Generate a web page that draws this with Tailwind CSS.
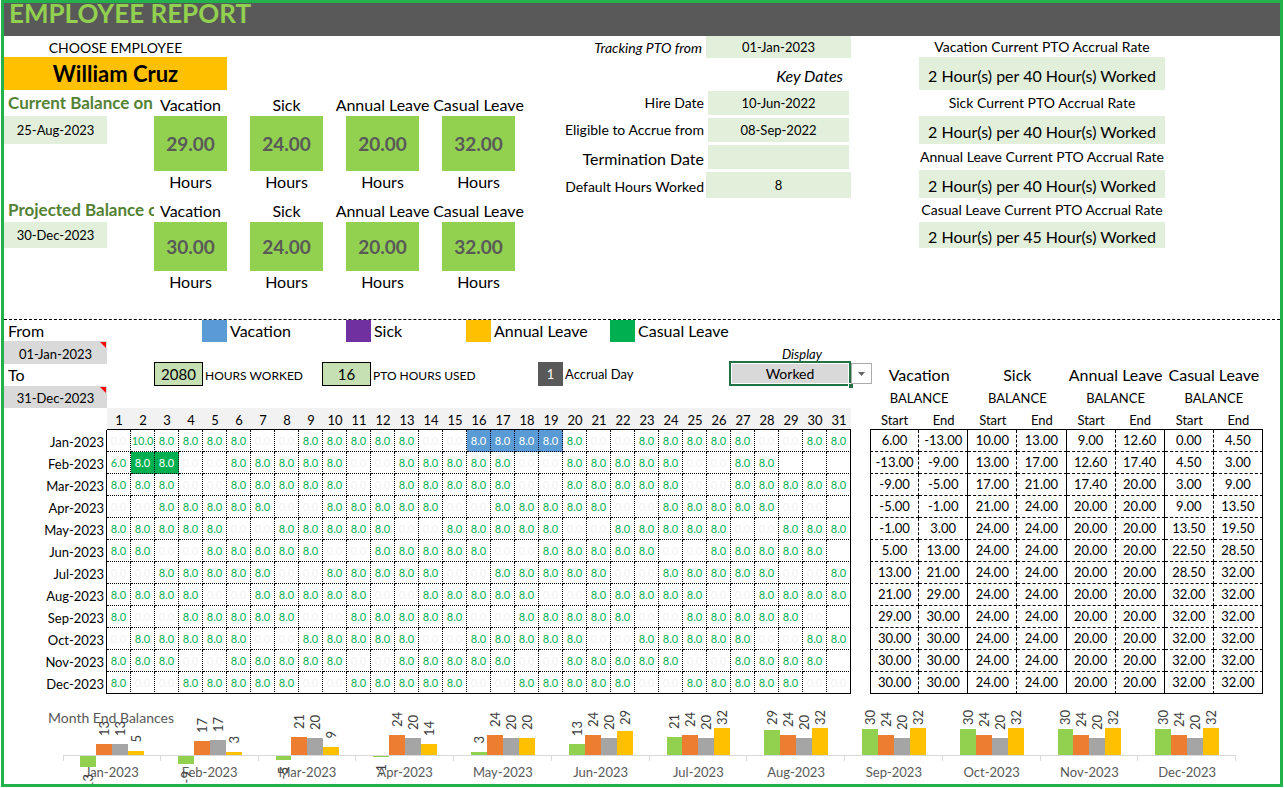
<!DOCTYPE html>
<html lang="en">
<head>
  <meta charset="UTF-8">
  <meta name="viewport" content="width=device-width, initial-scale=1.0">
  <title>Employee Report - PTO Tracker</title>
  <script src="https://cdn.jsdelivr.net/npm/@tailwindcss/browser@4"></script>
</head>
<body class="bg-white text-black font-[Lato,'Open_Sans',sans-serif]">

  <div class="mx-px border-[3px] border-[#22b14c] text-[16px] leading-5 whitespace-nowrap">

    <header class="h-[33px] bg-[#595959] px-[5px]">
      <h1 class="text-[26px] leading-[21px] font-bold text-[#92d050]">EMPLOYEE REPORT</h1>
    </header>

    <!-- Balances, key dates, accrual rates -->
    <section class="flex h-[284px] border-b border-dashed border-black">

      <div class="w-[528px] flex-none">
        <div class="w-[223px]">
          <label for="employee" class="block h-[21px] leading-[23px] text-center text-[14px]">CHOOSE EMPLOYEE</label>
          <select id="employee" class="block w-full h-[33px] appearance-none bg-[#ffc000] text-center [text-align-last:center] text-[22px] leading-[33px] font-bold">
            <option>William Cruz</option>
          </select>
        </div>

        <div class="flex h-[108px]">
          <div class="w-[150px] overflow-hidden">
            <h2 class="h-[26px] pl-1 leading-[26px] text-[17px] font-bold text-[#548235]">Current Balance on</h2>
            <p class="w-[103px] h-7 leading-7 bg-[#e2efda] text-center text-[13px]">25-Aug-2023</p>
          </div>
          <div id="currentBalances" class="flex gap-[23px]"></div>
        </div>

        <div class="flex">
          <div class="w-[150px] overflow-hidden">
            <h2 class="h-6 pl-1 leading-6 text-[17px] font-bold text-[#548235]">Projected Balance on</h2>
            <p class="w-[103px] h-[26px] leading-[26px] bg-[#e2efda] text-center text-[13px]">30-Dec-2023</p>
          </div>
          <div id="projectedBalances" class="flex gap-[23px]"></div>
        </div>
      </div>

      <div class="flex-1 text-[14px]">
        <div class="flex justify-end items-center h-[22px]">
          <span class="italic pr-1 pt-0.5">Tracking PTO from</span>
          <span class="w-[145px] h-[22px] leading-[22px] bg-[#e2efda] text-center text-[13px]">01-Jan-2023</span>
        </div>
        <p class="h-[33px] pr-2 pt-2 text-right text-[16px] leading-5 italic">Key Dates</p>
        <div class="flex flex-col gap-[3px]">
          <div class="flex justify-end h-6 leading-6 pr-0.5">
            <span class="pr-1">Hire Date</span>
            <span class="w-[141px] bg-[#e2efda] text-center text-[13px]">10-Jun-2022</span>
          </div>
          <div class="flex justify-end h-6 leading-6 pr-0.5">
            <span class="pr-1">Eligible to Accrue from</span>
            <span class="w-[141px] bg-[#e2efda] text-center text-[13px]">08-Sep-2022</span>
          </div>
          <div class="flex justify-end h-6 leading-7 pr-0.5">
            <span class="pr-1 text-[16px]">Termination Date</span>
            <span class="w-[141px] bg-[#e2efda]"></span>
          </div>
          <div class="flex justify-end h-[26px] leading-[26px]">
            <span class="pr-0.5 pt-0.5">Default Hours Worked</span>
            <span class="w-[145px] bg-[#e2efda] text-center text-[13px]">8</span>
          </div>
        </div>
      </div>

      <div class="w-[246px] flex-none ml-[68px] mr-[115px] text-center">
        <p class="h-[21px] leading-[21px] text-[14px]">Vacation Current PTO Accrual Rate</p>
        <p class="h-[33px] leading-[38px] bg-[#e2efda]">2 Hour(s) per 40 Hour(s) Worked</p>
        <p class="h-[26px] leading-[26px] text-[14px]">Sick Current PTO Accrual Rate</p>
        <p class="h-7 leading-8 bg-[#e2efda]">2 Hour(s) per 40 Hour(s) Worked</p>
        <p class="h-[26px] leading-[26px] text-[14px]">Annual Leave Current PTO Accrual Rate</p>
        <p class="h-7 leading-8 bg-[#e2efda]">2 Hour(s) per 40 Hour(s) Worked</p>
        <p class="h-6 leading-6 text-[14px]">Casual Leave Current PTO Accrual Rate</p>
        <p class="h-[26px] leading-[30px] bg-[#e2efda]">2 Hour(s) per 45 Hour(s) Worked</p>
      </div>
    </section>

    <section class="flex gap-[19px] pr-[17px]">

      <div class="flex-1">
        <div class="flex h-[88px]">
          <div class="w-[103px] flex-none">
            <label for="fromDate" class="block h-[21px] leading-[22px] pl-1">From</label>
            <div class="relative">
              <input id="fromDate" type="text" value="01-Jan-2023" class="block w-full h-[23px] pt-0.5 bg-[#d9d9d9] text-center text-[13px]">
              <svg class="absolute top-px right-px" width="6" height="6"><path d="M0 0h6v6z" fill="#f00"/></svg>
            </div>
            <label for="toDate" class="block h-[22px] leading-[22px] pl-1">To</label>
            <div class="relative">
              <input id="toDate" type="text" value="31-Dec-2023" class="block w-full h-[22px] pt-0.5 bg-[#d9d9d9] text-center text-[13px]">
              <svg class="absolute top-px right-px" width="6" height="6"><path d="M0 0h6v6z" fill="#f00"/></svg>
            </div>
          </div>

          <div class="flex-1">
            <ul class="flex h-[22px] pl-[95px] leading-[22px]">
              <li class="flex gap-[3px] w-36"><span class="w-[25px] bg-[#5b9bd5]"></span>Vacation</li>
              <li class="flex gap-[3px] w-[120px]"><span class="w-[25px] bg-[#7030a0]"></span>Sick</li>
              <li class="flex gap-[3px] w-36"><span class="w-[25px] bg-[#ffc000]"></span>Annual Leave</li>
              <li class="flex gap-[3px]"><span class="w-[25px] bg-[#00b050]"></span>Casual Leave</li>
            </ul>

            <div class="flex items-end h-11 pl-[47px] text-[13px]">
              <div class="flex h-6 w-[168px]">
                <span class="w-[49px] h-6 leading-[23px] border border-black bg-[#c6e0b4] text-center text-[15px]">2080</span>
                <span class="pl-0.5 leading-[27px] text-[12px]">HOURS WORKED</span>
              </div>
              <div class="flex h-6 w-[216px]">
                <span class="w-[49px] h-6 leading-[23px] border border-black bg-[#c6e0b4] text-center text-[15px]">16</span>
                <span class="pl-0.5 leading-[27px] text-[12px]">PTO HOURS USED</span>
              </div>
              <div class="flex h-6">
                <span class="w-[25px] h-6 leading-6 bg-[#595959] text-white text-center">1</span>
                <span class="pl-0.5 leading-[25px]">Accrual Day</span>
              </div>
              <div class="ml-auto w-[122px]">
                <label for="display" class="block h-4 leading-[18px] pl-6 text-center italic">Display</label>
                <div class="relative">
                  <select id="display" class="block w-full h-[25px] appearance-none border-2 border-[#217346] bg-[#d9d9d9] outline-1 -outline-offset-3 outline-white text-center [text-align-last:center] text-[14px]">
                    <option>Worked</option>
                    <option>PTO</option>
                  </select>
                  <span class="absolute -bottom-0.5 -right-0.5 w-[5px] h-[5px] border-t border-l border-white bg-[#217346]"></span>
                  <span class="absolute top-0.5 left-full w-[21px] h-[21px] border border-[#ababab] bg-white flex items-center justify-center pointer-events-none">
                    <svg width="7" height="4"><path d="M0 0h7L3.500 4z" fill="#666"/></svg>
                  </span>
                </div>
              </div>
            </div>
          </div>
        </div>

        <table class="w-full table-fixed border-separate border-spacing-0 text-center leading-none">
          <thead><tr id="dayHead" class="h-[22px] text-[13px]"></tr></thead>
          <tbody id="dayRows"></tbody>
        </table>
      </div>

      <table class="w-[393px] flex-none mt-11 table-fixed border-separate border-spacing-0 text-center text-[13px] leading-none self-start">
        <thead>
          <tr class="h-[22px] text-[16px]">
            <th colspan="2" class="p-0 font-normal">Vacation</th>
            <th colspan="2" class="p-0 font-normal">Sick</th>
            <th colspan="2" class="p-0 font-normal">Annual Leave</th>
            <th colspan="2" class="p-0 font-normal">Casual Leave</th>
          </tr>
          <tr class="h-[22px]">
            <th colspan="2" class="p-0 pt-0.5 font-normal">BALANCE</th>
            <th colspan="2" class="p-0 pt-0.5 font-normal">BALANCE</th>
            <th colspan="2" class="p-0 pt-0.5 font-normal">BALANCE</th>
            <th colspan="2" class="p-0 pt-0.5 font-normal">BALANCE</th>
          </tr>
          <tr id="balanceHead" class="h-[22px]"></tr>
        </thead>
        <tbody id="balanceRows"></tbody>
      </table>
    </section>

    <!-- Month end chart -->
    <section class="relative h-[90px] overflow-hidden pt-[61px] pl-[59px] pr-[44px] text-[13px] text-[#595959]">
      <h2 class="absolute left-11 top-[14px] leading-5 text-[14px]">Month End Balances</h2>
      <div id="chart" class="flex h-[29px]"></div>
    </section>
  </div>

  <script>
    const months = ['Jan', 'Feb', 'Mar', 'Apr', 'May', 'Jun', 'Jul', 'Aug', 'Sep', 'Oct', 'Nov', 'Dec'];
    const types  = ['Vacation', 'Sick', 'Annual Leave', 'Casual Leave'];

    // opening balance followed by each month end
    const balances = [
      [6, -13, -9, -5, -1, 3, 13, 21, 29, 30, 30, 30, 30],
      [10, 13, 17, 21, 24, 24, 24, 24, 24, 24, 24, 24, 24],
      [9, 12.6, 17.4, 20, 20, 20, 20, 20, 20, 20, 20, 20, 20],
      [0, 4.5, 3, 9, 13.5, 19.5, 28.5, 32, 32, 32, 32, 32, 32]
    ];
    // June opens with mid-year adjustments
    const startOverrides = { '0-5': 5, '3-5': 22.5 };

    const exceptions = { '0-2': '10.0', '1-1': '6.0' };
    const leave = {
      '0-16': 'bg-[#5b9bd5] text-white', '0-17': 'bg-[#5b9bd5] text-white',
      '0-18': 'bg-[#5b9bd5] text-white', '0-19': 'bg-[#5b9bd5] text-white',
      '1-2': 'bg-[#00b050] text-white', '1-3': 'bg-[#00b050] text-white'
    };

    function balanceCards(id, values, labelCls, boxCls) {
      document.getElementById(id).innerHTML = types.map((t, i) => `
        <div class="w-[73px] text-center">
          <p class="flex justify-center ${labelCls}">${t}</p>
          <p class="bg-[#92d050] text-[#595959] text-[19px] font-bold ${boxCls}">${values[i].toFixed(2)}</p>
          <p class="leading-[22px]">Hours</p>
        </div>`).join('');
    }
    balanceCards('currentBalances', [29, 24, 20, 32], 'h-[26px] leading-[30px]', 'h-[55px] leading-[55px]');
    balanceCards('projectedBalances', [30, 24, 20, 32], 'h-6 leading-[26px]', 'h-[49px] leading-[49px]');

    // calendar
    let head = '<th class="w-[103px] p-0 border-r border-transparent"></th>';
    for (let d = 1; d <= 31; d++) {
      head += `<th class="p-0 pt-1 font-normal bg-[#f2f2f2] border-b border-black">${d}</th>`;
    }
    document.getElementById('dayHead').innerHTML = head;

    document.getElementById('dayRows').innerHTML = months.map((m, mi) => {
      const bottom = mi === 11 ? 'border-b border-b-black' : 'border-b border-b-black [border-bottom-style:dotted]';
      let row = `<th class="p-0 pt-0.5 pr-0.5 text-right text-[13px] font-normal border-r border-black">${m}-2023</th>`;
      for (let d = 1; d <= 31; d++) {
        const date = new Date(2023, mi, d);
        const off = date.getDay() === 0 || date.getDay() === 6;
        const key = mi + '-' + d;
        const text = date.getMonth() !== mi ? '' : off ? '0.0' : exceptions[key] || '8.0';
        const colour = leave[key] || (off ? 'text-[#f2f2f2]' : 'text-[#00b050]');
        const right = d === 31 ? 'border-r border-r-black' : 'border-r border-r-black [border-right-style:dotted]';
        row += `<td class="p-0 ${right} ${bottom} ${colour}">${text}</td>`;
      }
      return `<tr class="h-[22px] text-[11px]">${row}</tr>`;
    }).join('');

    // start / end balances
    document.getElementById('balanceHead').innerHTML = types.map(() =>
      '<th class="p-0 pt-1 font-normal border-b border-black">Start</th><th class="p-0 pt-1 font-normal border-b border-black">End</th>').join('');

    document.getElementById('balanceRows').innerHTML = months.map((m, mi) => {
      const bottom = mi === 11 ? 'border-b border-b-black' : 'border-b border-b-black [border-bottom-style:dashed]';
      const cells = balances.map((b, bi) => {
        const start = startOverrides[bi + '-' + mi] ?? b[mi];
        return `
        <td class="p-0 ${bi === 0 ? 'border-l border-l-black' : ''} border-r border-r-black [border-right-style:dashed] ${bottom}">${start.toFixed(2)}</td>
        <td class="p-0 border-r border-r-black ${bottom}">${b[mi + 1].toFixed(2)}</td>`;
      }).join('');
      return `<tr class="h-[22px]">${cells}</tr>`;
    }).join('');

    // chart, 0.85px per hour; labels stay inside the top of the plot
    const fills = ['bg-[#92d050]', 'bg-[#ed7d31]', 'bg-[#a5a5a5]', 'bg-[#ffc000]'];
    document.getElementById('chart').innerHTML = months.map((m, mi) => {
      const bars = balances.map((b, bi) => {
        const v = b[mi + 1];
        const h = Math.max(1, Math.round(Math.abs(v) * 0.85));
        const bar  = v < 0 ? `top:0;height:${h}px` : `bottom:1px;height:${h}px`;
        const text = v < 0 ? `top:${h + 7}px` : `bottom:${Math.min(h + 9, 31)}px`;
        return `
          <div class="relative flex-1 h-0">
            <div class="absolute inset-x-0 ${fills[bi]}" style="${bar}"></div>
            <span class="absolute inset-x-0 flex justify-center" style="${text}"><span class="[writing-mode:vertical-rl] rotate-180 leading-4 text-[#404040]">${Math.round(v)}</span></span>
          </div>`;
      }).join('');
      return `
        <div class="relative flex-1 border-t border-[#d9d9d9]">
          <div class="flex h-0 px-[17px]">${bars}</div>
          <p class="pt-[6px] text-center leading-5">${m}-2023</p>
          ${mi === 0 ? '<span class="absolute left-0 top-0 w-px h-[5px] bg-[#d9d9d9]"></span>' : ''}
          <span class="absolute right-0 top-0 w-px h-[5px] bg-[#d9d9d9]"></span>
        </div>`;
    }).join('');
  </script>

</body>
</html>
